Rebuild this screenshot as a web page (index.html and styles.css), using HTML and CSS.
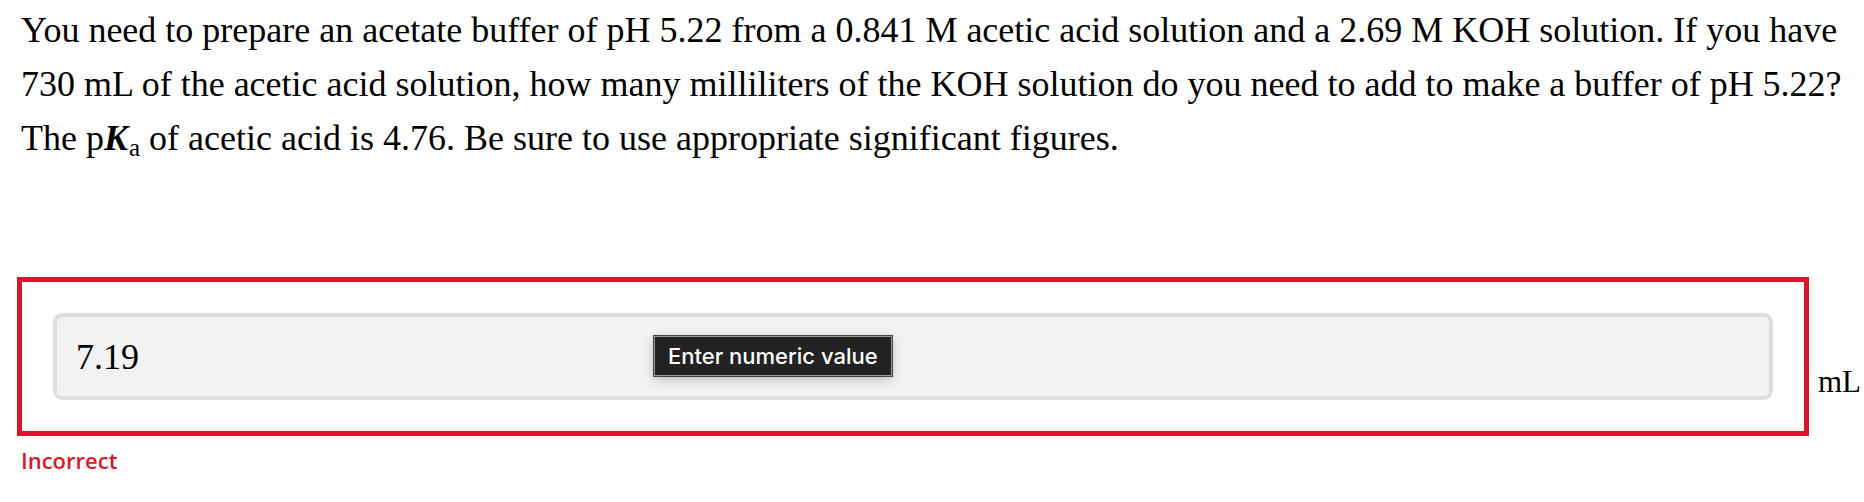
FILE: index.html
```html
<!DOCTYPE html>
<html>
<head>
<meta charset="utf-8">
<link rel="stylesheet" href="styles.css">
</head>
<body>
<div class="page">
  <p class="question">You need to prepare an acetate buffer of pH 5.22 from a 0.841 M acetic acid solution and a 2.69 M KOH solution. If you have 730 mL of the acetic acid solution, how many milliliters of the KOH solution do you need to add to make a buffer of pH 5.22? The p<i class="k">K</i><sub class="sub">a</sub> of acetic acid is 4.76. Be sure to use appropriate significant figures.</p>
  <div class="answer-row">
    <div class="answer-box">
      <div class="field">
        <input class="input" type="text" value="7.19">
        <div class="tooltip">Enter numeric value</div>
      </div>
    </div>
    <span class="unit">mL</span>
  </div>
  <div class="feedback">Incorrect</div>
</div>
</body>
</html>
```
FILE: styles.css
```css
html, body {
  margin: 0;
  padding: 0;
  background: #ffffff;
}
.page {
  padding: 3px 0 0 17px;
  font-family: "Liberation Serif", "Times New Roman", serif;
  color: #000;
}
.question {
  margin: 0;
  padding-left: 4px;
  font-size: 36px;
  line-height: 54px;
  width: 1830px;
}
.k {
  font-style: italic;
  font-weight: 600;
}
.sub {
  font-size: 25px;
  line-height: 0;
  vertical-align: -6px;
  margin-left: 1px;
}
.answer-row {
  display: flex;
  align-items: flex-start;
  margin-top: 112px;
}
.answer-box {
  width: 1792px;
  border: 5px solid #d4182a;
  padding: 31px;
  box-sizing: border-box;
}
.field {
  position: relative;
}
.input {
  display: block;
  width: 100%;
  height: 87px;
  box-sizing: border-box;
  border: 4px solid #dedede;
  border-radius: 9px;
  background: #f2f2f2;
  padding: 0 19px;
  font-family: "Liberation Serif", "Times New Roman", serif;
  font-size: 36px;
  color: #000;
  outline: none;
  margin: 0;
}
.tooltip {
  position: absolute;
  left: 601px;
  top: 23px;
  background: #222222;
  color: #ffffff;
  font-family: Inter, "Liberation Sans", sans-serif;
  font-weight: 500;
  font-size: 22px;
  line-height: 38px;
  height: 38px;
  padding: 0 13px;
  border: 1px solid #9a9a9a;
  outline: 1px solid #444444;
  box-shadow: 0 3px 10px rgba(0, 0, 0, 0.25);
  white-space: nowrap;
}
.unit {
  font-size: 31px;
  margin-left: 9px;
  margin-top: 87px;
  line-height: 36px;
}
.feedback {
  margin-top: 9px;
  padding-left: 4px;
  font-family: "Open Sans", sans-serif;
  font-weight: 600;
  font-size: 22px;
  color: #d4182a;
}
```
